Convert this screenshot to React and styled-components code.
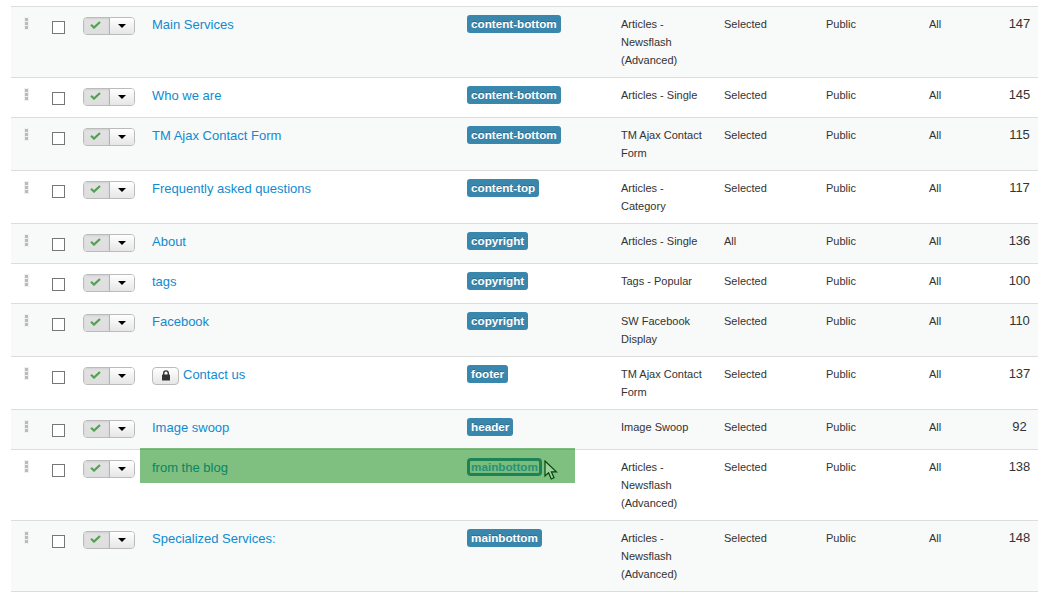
import React from 'react';
import styled, { createGlobalStyle } from 'styled-components';

const Global = createGlobalStyle`
  html, body { margin: 0; padding: 0; background: #fff; overflow: hidden; }
  body { font-family: "Liberation Sans", Arial, sans-serif; }
`;

const Page = styled.div`
  padding: 6px 14px 0 11px;
  width: 1052px;
  height: 598px;
  box-sizing: border-box;
  overflow: hidden;
`;

const Table = styled.table`
  width: 1027px;
  table-layout: fixed;
  border-collapse: separate;
  border-spacing: 0;
  border-top: 1px solid #ddd;
  font-size: 11px;
  line-height: 18px;
  color: #333;
`;

const Row = styled.tr`
  background: ${(p) => (p.$striped ? '#f8f9f9' : '#fff')};
`;

const Cell = styled.td`
  padding: 8px;
  vertical-align: top;
  border-bottom: 1px solid #ddd;
  font-size: 11px;
`;

const TitleCell = styled(Cell)`
  position: relative;
  padding-top: 9px;
  padding-bottom: 7px;
`;

const IdCell = styled(Cell)`
  padding-left: 0;
  padding-right: 0;
  text-align: center;
  font-size: 13px;
`;

const DragCell = styled(Cell)`
  padding: 0 0 0 14px;
`;

const Grip = styled.span`
  display: block;
  width: 3px;
  height: 11px;
  margin-top: 11px;
  background: repeating-linear-gradient(to bottom, #bbb 0 3px, #eee 3px 4px);
  box-shadow: 0 0 0 1px #f0f0f0;
`;

const CheckCell = styled(Cell)`
  padding: 14px 0 0 8px;
`;

const Check = styled.span`
  display: block;
  width: 11px;
  height: 11px;
  background: #fff;
  border: 1px solid #767676;
`;

const ButtonGroup = styled.div`
  display: flex;
  height: 18px;
  width: 52px;
  margin: 2px 0 3px;
  border: 1px solid #bbb;
  border-radius: 4px;
  box-sizing: border-box;
  overflow: hidden;
`;

const StateButton = styled.span`
  display: flex;
  align-items: center;
  justify-content: center;
  box-sizing: border-box;
  width: 26px;
  padding: 0 2px 2px 0;
  background: linear-gradient(#e2e2e2, #dedede);
  box-shadow: inset 0 1px 2px rgba(0, 0, 0, 0.08);
  border-right: 1px solid #b3b3b3;
`;

const CaretButton = styled.span`
  display: flex;
  align-items: center;
  justify-content: center;
  flex: 1;
  background: linear-gradient(#fff, #e6e6e6);
`;

const Caret = styled.span`
  width: 0;
  height: 0;
  border-left: 4px solid transparent;
  border-right: 4px solid transparent;
  border-top: 4px solid #000;
`;

const TitleLink = styled.a`
  color: #0f8bd0;
  font-size: 13px;
  line-height: 18px;
  text-decoration: none;
`;

const LockButton = styled.span`
  display: inline-flex;
  align-items: center;
  justify-content: center;
  box-sizing: border-box;
  width: 27px;
  height: 18px;
  margin: -2px 4px 0 0;
  vertical-align: -2px;
  border: 1px solid #bbb;
  border-radius: 4px;
  background: linear-gradient(#fff, #e6e6e6);
`;

const Badge = styled.span`
  display: inline-block;
  padding: 2px 4px;
  font-size: 11.7px;
  font-weight: bold;
  line-height: 14px;
  color: #fff;
  text-shadow: 0 -1px 0 rgba(0, 0, 0, 0.25);
  background: #3a87ad;
  border-radius: 3px;
`;

const OutlinedBadge = styled(Badge)`
  color: #50a0f0;
  background: #f0faf6;
  box-shadow: inset 0 0 0 3px #3a87ad;
  border-radius: 4px;
  text-shadow: none;
`;

const Highlight = styled.div`
  position: absolute;
  left: -4px;
  top: -2px;
  width: 435px;
  height: 35px;
  background: rgba(0, 128, 0, 0.5);
  pointer-events: none;
`;

const Pointer = styled.svg`
  position: absolute;
  left: 404px;
  top: 12px;
`;

const IconCheck = () => (
  <svg width="11" height="8" viewBox="0 0 11 8">
    <path d="M1 3.8 L4 6.6 L10 1" fill="none" stroke="#51a351" strokeWidth="2.2" />
  </svg>
);

const IconLock = () => (
  <svg width="10" height="11" viewBox="0 0 10 11">
    <path d="M2.7 5V3.2a2.3 2.3 0 0 1 4.6 0V5" fill="none" stroke="#333" strokeWidth="1.4" />
    <rect x="1" y="4.6" width="8" height="6" rx="0.6" fill="#333" />
  </svg>
);

const rows = [
  ['Main Services', 'content-bottom', 'Articles -\nNewsflash\n(Advanced)', 'Selected', 147],
  ['Who we are', 'content-bottom', 'Articles - Single', 'Selected', 145],
  ['TM Ajax Contact Form', 'content-bottom', 'TM Ajax Contact\nForm', 'Selected', 115],
  ['Frequently asked questions', 'content-top', 'Articles -\nCategory', 'Selected', 117],
  ['About', 'copyright', 'Articles - Single', 'All', 136],
  ['tags', 'copyright', 'Tags - Popular', 'Selected', 100],
  ['Facebook', 'copyright', 'SW Facebook\nDisplay', 'Selected', 110],
  ['Contact us', 'footer', 'TM Ajax Contact\nForm', 'Selected', 137, 'lock'],
  ['Image swoop', 'header', 'Image Swoop', 'Selected', 92],
  ['from the blog', 'mainbottom', 'Articles -\nNewsflash\n(Advanced)', 'Selected', 138, 'drag'],
  ['Specialized Services:', 'mainbottom', 'Articles -\nNewsflash\n(Advanced)', 'Selected', 148],
];

const widths = [33, 31, 69, 315, 154, 103, 102, 103, 80, 37];

export default function App() {
  return (
    <Page>
      <Global />
      <Table>
        <colgroup>
          {widths.map((w, i) => (
            <col key={i} style={{ width: w }} />
          ))}
        </colgroup>
        <tbody>
          {rows.map(([title, position, type, pages, id, flag], i) => {
            const BadgeEl = flag === 'drag' ? OutlinedBadge : Badge;
            return (
              <Row key={title} $striped={i % 2 === 0}>
                <DragCell><Grip /></DragCell>
                <CheckCell><Check /></CheckCell>
                <Cell>
                  <ButtonGroup>
                    <StateButton><IconCheck /></StateButton>
                    <CaretButton><Caret /></CaretButton>
                  </ButtonGroup>
                </Cell>
                <TitleCell>
                  {flag === 'lock' && <LockButton><IconLock /></LockButton>}
                  <TitleLink href="#">{title}</TitleLink>
                  {flag === 'drag' && (
                    <Highlight>
                      <Pointer width="14" height="21" viewBox="0 0 14 21">
                        <path
                          d="M1 1 L1 16 L4.6 12.8 L7.2 19 L10 17.8 L7.4 11.8 L12.4 11.8 Z"
                          fill="rgba(255,255,255,0.25)"
                          stroke="#00480a"
                          strokeWidth="1.2"
                        />
                      </Pointer>
                    </Highlight>
                  )}
                </TitleCell>
                <Cell><BadgeEl>{position}</BadgeEl></Cell>
                <Cell>
                  {type.split('\n').map((l) => (
                    <div key={l}>{l}</div>
                  ))}
                </Cell>
                <Cell>{pages}</Cell>
                <Cell>Public</Cell>
                <Cell>All</Cell>
                <IdCell>{id}</IdCell>
              </Row>
            );
          })}
        </tbody>
      </Table>
    </Page>
  );
}
